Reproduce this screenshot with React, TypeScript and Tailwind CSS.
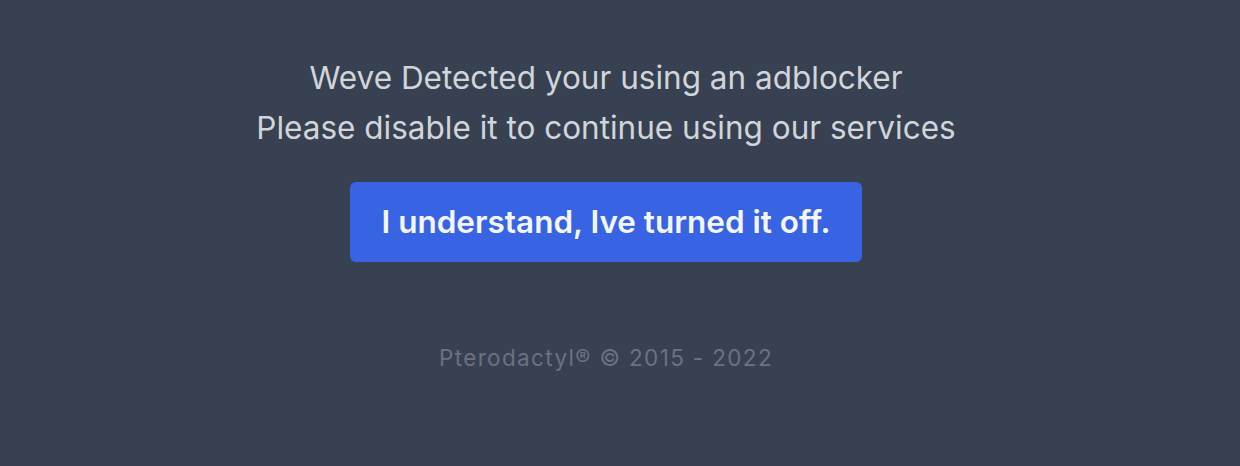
export default function App() {
  return (
    <div className="min-h-[466px] w-full bg-[#374151] flex justify-center" style={{ fontFamily: 'Inter, "Noto Sans", sans-serif' }}>
      <div className="flex flex-col items-center pt-[53px] mr-[28px]">
        <p className="text-[31.5px] leading-[50px] text-[#d1d5db] text-center">
          Weve Detected your using an adblocker
          <br />
          Please disable it to continue using our services
        </p>
        <button className="mt-[29px] w-[512px] h-[80px] rounded-[6px] bg-[#3864e4] text-[#f3f6fd] text-[31.5px] font-semibold">
          I understand, Ive turned it off.
        </button>
        <p className="mt-[81px] text-[22.5px] leading-[30px] tracking-[0.06em] text-[#6b7280]">Pterodactyl® © 2015 - 2022</p>
      </div>
    </div>
  );
}
